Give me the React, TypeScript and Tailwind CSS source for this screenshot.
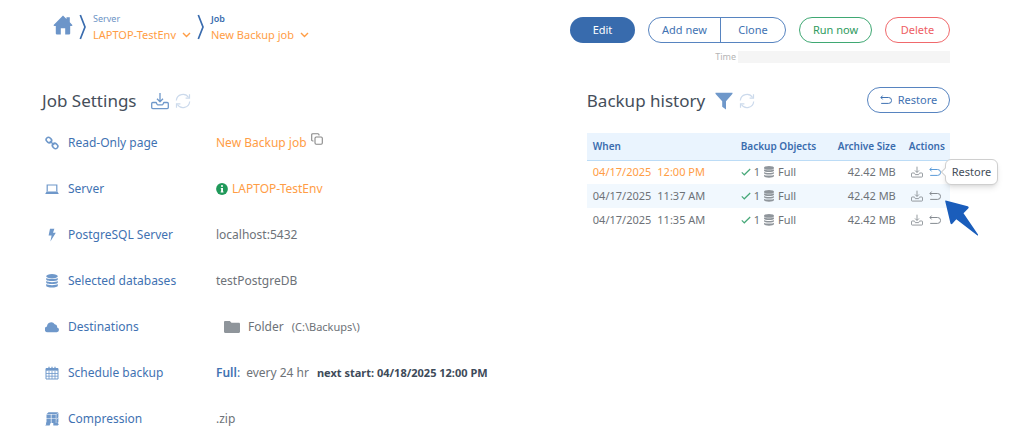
import type { ReactNode } from "react";

type IconProps = { className?: string };

const ChainIcon = ({ className }: IconProps) => (
  <svg viewBox="0 0 14 14" className={className} fill="none" stroke="currentColor" strokeWidth="1.6" aria-hidden="true">
    <rect x="1" y="1.800" width="5.800" height="4.600" rx="2.3" transform="rotate(45 3.9 4.1)" />
    <rect x="7.200" y="7.600" width="5.800" height="4.600" rx="2.3" transform="rotate(45 10.1 9.9)" />
    <path d="M4.800 5l4.400 4" strokeWidth="1.500" />
  </svg>
);

const LaptopIcon = ({ className }: IconProps) => (
  <svg viewBox="0 0 14 14" className={className} aria-hidden="true">
    <path d="M2.2 9.4V3h9.6v6.4" fill="none" stroke="currentColor" strokeWidth="1.2" />
    <path d="M1.6 9.4h10.8l1.4 2.6H.2z" fill="currentColor" />
  </svg>
);

const BoltIcon = ({ className }: IconProps) => (
  <svg viewBox="0 0 14 14" className={className} fill="currentColor" aria-hidden="true">
    <path d="M5 .8h4.4L8 4.8h2.8L5.4 13.4 6.6 7.600H3.600z" />
  </svg>
);

const DatabaseIcon = ({ className }: IconProps) => (
  <svg viewBox="0 0 14 14" className={className} fill="currentColor" aria-hidden="true">
    <ellipse cx="7" cy="2.300" rx="5.800" ry="2.200" />
    <path d="M1.200 3.900c1.500 1.500 10.100 1.500 11.600 0v1.500c0 2-11.600 2-11.600 0z" />
    <path d="M1.200 7c1.500 1.500 10.100 1.500 11.600 0v1.500c0 2-11.600 2-11.600 0z" />
    <path d="M1.200 10.100c1.500 1.500 10.100 1.500 11.600 0v1.700c0 2.400-11.600 2.400-11.600 0z" />
  </svg>
);

const CloudIcon = ({ className }: IconProps) => (
  <svg viewBox="0 0 14 14" className={className} fill="currentColor" aria-hidden="true">
    <path d="M3 12.300A3 3 0 0 1 2 6.400 4.200 4.200 0 0 1 9.700 4.200a2.800 2.800 0 0 1 2.400 3.200A2.500 2.500 0 0 1 11.800 12.300z" />
  </svg>
);

const CalendarIcon = ({ className }: IconProps) => (
  <svg viewBox="0 0 14 14" className={className} fill="none" stroke="currentColor" aria-hidden="true">
    <path d="M1 2.500h12V13H1z" strokeWidth="1" />
    <path d="M1 3.500h12" strokeWidth="2.400" />
    <path d="M4 0.800v3M7 0.800v3M10 0.800v3" strokeWidth="1.200" />
    <path d="M4 5v8M7 5v8M10 5v8M1 7.500h12M1 10.200h12" strokeWidth="0.800" />
  </svg>
);

const ArchiveIcon = ({ className }: IconProps) => (
  <svg viewBox="0 0 14 14" className={className} fill="currentColor" aria-hidden="true">
    <path d="M3.500.3h9.800l-1.700 1.800H1.700z" />
    <path d="M1.500 2.500h4.300v3.900H1.500zM6.500 2.500h4.300v3.900H6.500zM11.300 2.500 13.400.7v4.800l-2.100 1.600zM1.500 7h4.300v4H1.500zM6.500 7h4.300v4H6.500zM11.300 7.600l2.100-1.700v4.400l-2.100 1.500z" />
    <path d="M.9 10.600h4.900l-1.200 3H.2l1-1.300zM8.300 11h4.400l1.200 1.200-1.200 1.400H8.300z" />
  </svg>
);

const HomeIcon = ({ className }: IconProps) => (
  <svg viewBox="0 0 20 20" className={className} fill="currentColor" aria-hidden="true">
    <path d="M10 .6 13.500 4V2.200h3.300v5L19.600 10.200l-1 .9h-1.400v7.500c0 .5-.3.800-.8.800h-4.200v-6.200H7.800v6.200H3.600c-.5 0-.8-.3-.8-.8v-7.500H1.400l-1-.9z" />
  </svg>
);

const AngleSeparator = () => (
  <svg viewBox="0 0 8 26" className="h-[26px] w-2 shrink-0 text-[#3a6cae]" fill="none" stroke="currentColor" strokeWidth="1.700" aria-hidden="true">
    <path d="M1.300 1 6 13 1.300 25" />
  </svg>
);

const CaretIcon = () => (
  <svg viewBox="0 0 9 6" className="h-1.5 w-[9px]" fill="none" stroke="currentColor" strokeWidth="1.400" aria-hidden="true">
    <path d="M1 1l3.500 3.500L8 1" />
  </svg>
);

const TrayDownIcon = ({ className }: IconProps) => (
  <svg viewBox="0 0 18 18" className={className} fill="none" stroke="currentColor" strokeWidth="1.300" strokeLinejoin="round" aria-hidden="true">
    <path d="M9 1v8.500M6 6.700l3 3 3-3" />
    <path d="M5 10.500H1.800c-.7 0-1.100.4-1.100 1v4c0 .7.400 1.100 1.100 1.100h14.400c.7 0 1.100-.4 1.100-1.100v-4c0-.6-.4-1-1.100-1H13c-.6 0-.8 2.400-1.700 2.400H6.700c-.9 0-1.100-2.400-1.700-2.400z" />
  </svg>
);

const RefreshIcon = ({ className }: IconProps) => (
  <svg viewBox="0 0 16 16" className={className} fill="none" stroke="currentColor" strokeWidth="1.200" aria-hidden="true">
    <path d="M1.300 7.500A6.700 6.700 0 0 1 13.600 4.500M14.700 8.500A6.700 6.700 0 0 1 2.400 11.500" />
    <path d="M14.500 1.300v3.900h-3.900M1.500 14.700v-3.900h3.900" />
  </svg>
);

const ReturnIcon = ({ className }: IconProps) => (
  <svg viewBox="0 0 12 10" className={className} fill="none" stroke="currentColor" strokeWidth="1" aria-hidden="true">
    <path d="M2.600.6.900 2.500l1.700 1.900M1 2.500h7.600a2.900 2.900 0 0 1 0 5.900H1.200" />
  </svg>
);

const FunnelIcon = ({ className }: IconProps) => (
  <svg viewBox="0 0 18 18" className={className} fill="currentColor" aria-hidden="true">
    <path d="M.5.800h17c.2 1-.3 1.500-.8 2L11 9.300V17.500l-3.800-2.700V9.300L1.300 2.800c-.5-.5-1-1-.8-2z" />
  </svg>
);

const CopyIcon = ({ className }: IconProps) => (
  <svg viewBox="0 0 12 12" className={className} fill="none" stroke="currentColor" strokeWidth="1.100" aria-hidden="true">
    <rect x="4" y="4" width="7.300" height="7.300" rx="1.200" />
    <path d="M2.500 8H1.800C1.100 8 .7 7.600.7 6.900V1.800C.7 1.100 1.100.7 1.800.7h5.100c.7 0 1.100.4 1.100 1.100v.7" />
  </svg>
);

const InfoIcon = ({ className }: IconProps) => (
  <svg viewBox="0 0 12 12" className={className} aria-hidden="true">
    <circle cx="6" cy="6" r="5.900" fill="#20995a" />
    <path d="M5 2.300h2v1.500H5zM4.700 4.900H7v3.600h.5v1H4.600v-1h.5V5.800h-.4z" fill="#fff" />
  </svg>
);

const FolderIcon = ({ className }: IconProps) => (
  <svg viewBox="0 0 16 14" className={className} fill="currentColor" aria-hidden="true">
    <path d="M0 2.200C0 1.500.5 1 1.200 1h4.600l1.700 1.800h7.300c.7 0 1.200.5 1.200 1.200v7.800c0 .7-.5 1.200-1.200 1.200H1.200C.5 13 0 12.500 0 11.800z" />
  </svg>
);

const CheckIcon = ({ className }: IconProps) => (
  <svg viewBox="0 0 10 8" className={className} fill="none" stroke="currentColor" strokeWidth="1.200" aria-hidden="true">
    <path d="M.8 4.300 3.300 6.800 9.200 1" />
  </svg>
);

const Crumb = ({ label, name, strong }: { label: string; name: string; strong?: boolean }) => (
  <div className="flex flex-col">
    <span className={strong ? "text-[9px] leading-4 font-semibold text-[#3a6cae]" : "text-[9px] leading-4 text-[#6c93c5]"}>
      {label}
    </span>
    <button type="button" className="flex items-center gap-1.5 text-[11px] leading-4 text-[#ff9d45]">
      {name}
      <CaretIcon />
    </button>
  </div>
);

const Setting = ({ icon, label, children }: { icon: ReactNode; label: string; children: ReactNode }) => (
  <div className="flex h-[46px] items-center">
    <dt className="flex w-[174px] shrink-0 items-center gap-[9px] pl-[3px] text-[#3f72b2]">
      <span className="text-[#6f98ca]">{icon}</span>
      {label}
    </dt>
    <dd className="flex items-center text-[#6d7278]">{children}</dd>
  </div>
);

const history = [
  { date: "04/17/2025", time: "12:00 PM", active: true },
  { date: "04/17/2025", time: "11:37 AM", active: false },
  { date: "04/17/2025", time: "11:35 AM", active: false },
];

export default function App() {
  return (
    <div className="bg-white pr-[74px] pl-[42px] font-['Noto_Sans','Open_Sans',sans-serif] text-[12px] leading-5 text-[#6d7278]">
      <header className="flex items-start justify-between pt-[11px]">
        <nav aria-label="Breadcrumb" className="flex items-center gap-1.5 pl-[11px]">
          <a href="#home" aria-label="Home" className="mb-1 text-[#6c95c9]">
            <HomeIcon className="size-5" />
          </a>
          <AngleSeparator />
          <Crumb label="Server" name="LAPTOP-TestEnv" />
          <AngleSeparator />
          <Crumb label="Job" name="New Backup job" strong />
        </nav>
        <div className="flex flex-col items-end pt-1.5 text-[11px]">
          <div className="flex gap-[13px]">
            <button type="button" className="h-[26px] w-[65px] rounded-full bg-[#386bad] text-white">Edit</button>
            <div className="flex h-[26px] overflow-hidden rounded-full border border-[#5784c0] text-[#3f72b2]">
              <button type="button" className="w-[72px] border-r border-[#5784c0]">Add new</button>
              <button type="button" className="w-16">Clone</button>
            </div>
            <button type="button" className="h-[26px] w-[73px] rounded-full border border-[#3fa873] text-[#2f9b60]">Run now</button>
            <button type="button" className="h-[26px] w-[65px] rounded-full border border-[#f0696c] text-[#ee6064]">Delete</button>
          </div>
          <div className="mt-1 flex items-center gap-0.5 text-[9px] leading-5 text-[#b5b5b5]">
            Time
            <span className="h-3 w-[212px] bg-[#f5f5f5]" />
          </div>
        </div>
      </header>

      <main className="grid grid-cols-[minmax(0,3fr)_minmax(0,2fr)] pt-[17px]">
        <section>
          <div className="flex h-[33px] items-center">
            <h1 className="text-[17px] leading-6 text-[#454e5a]">Job Settings</h1>
            <button type="button" aria-label="Download settings" className="ml-3.5 text-[#6f98ca]">
              <TrayDownIcon className="size-[18px]" />
            </button>
            <button type="button" aria-label="Refresh settings" className="ml-1.5 text-[#ccdaec]">
              <RefreshIcon className="size-4" />
            </button>
          </div>
          <dl className="pt-[3px]">
            <Setting icon={<ChainIcon className="size-3.5" />} label="Read-Only page">
              <a href="#job" className="text-[#ff9d45]">New Backup job</a>
              <button type="button" aria-label="Copy link" className="mb-2 ml-1 text-[#888]">
                <CopyIcon className="size-3" />
              </button>
            </Setting>
            <Setting icon={<LaptopIcon className="size-3.5" />} label="Server">
              <InfoIcon className="mr-1 size-3" />
              <a href="#server" className="text-[#ff9d45]">LAPTOP-TestEnv</a>
            </Setting>
            <Setting icon={<BoltIcon className="size-3.5" />} label="PostgreSQL Server">localhost:5432</Setting>
            <Setting icon={<DatabaseIcon className="size-3.5" />} label="Selected databases">testPostgreDB</Setting>
            <Setting icon={<CloudIcon className="size-3.5" />} label="Destinations">
              <FolderIcon className="ml-2 h-3.5 w-4 text-[#8f959b]" />
              <span className="ml-2">Folder</span>
              <span className="ml-2 text-[11px]">(C:\Backups\)</span>
            </Setting>
            <Setting icon={<CalendarIcon className="size-3.5" />} label="Schedule backup">
              <span className="text-[#3f72b2]"><b className="font-semibold">Full</b>:</span>
              <span className="ml-1.5">every 24 hr</span>
              <b className="ml-2 text-[11px] font-bold text-[#3d4a59]">next start: 04/18/2025 12:00 PM</b>
            </Setting>
            <Setting icon={<ArchiveIcon className="size-3.5" />} label="Compression">.zip</Setting>
          </dl>
        </section>

        <section>
          <div className="flex h-[33px] items-center">
            <h2 className="text-[17px] leading-6 text-[#454e5a]">Backup history</h2>
            <button type="button" aria-label="Filter history" className="ml-2.5 text-[#6f98ca]">
              <FunnelIcon className="size-[18px]" />
            </button>
            <button type="button" aria-label="Refresh history" className="ml-1.5 text-[#ccdaec]">
              <RefreshIcon className="size-4" />
            </button>
            <button type="button" className="mb-0.5 ml-auto flex h-[26px] w-[83px] items-center justify-center gap-1.5 rounded-full border border-[#5784c0] text-[11px] text-[#3f72b2]">
              <ReturnIcon className="h-2.5 w-3" />
              Restore
            </button>
          </div>
          <table className="mt-4 w-full table-fixed text-left text-[11px] whitespace-nowrap">
            <colgroup>
              <col className="w-[41%]" />
              <col className="w-[24%]" />
              <col className="w-[22%]" />
              <col className="w-[13%]" />
            </colgroup>
            <thead>
              <tr className="h-[27px] border-b border-[#bcdcf6] bg-[#eaf4fe] text-[10px] text-[#3a6cae]">
                <th className="pl-1.5 font-semibold">When</th>
                <th className="pl-[5px] font-semibold">Backup Objects</th>
                <th className="pr-[7px] text-right font-semibold">Archive Size</th>
                <th className="pl-1.5 font-semibold">Actions</th>
              </tr>
            </thead>
            <tbody>
              {history.map((run) => (
                <tr key={run.time} className="h-6 even:bg-[#f1f8fe]">
                  <td className={run.active ? "pl-1.5 text-[#ff9d45]" : "pl-1.5"}>
                    {run.date}
                    <span className="ml-1.5">{run.time}</span>
                  </td>
                  <td className="pl-[5px]">
                    <div className="flex items-center gap-[3px]">
                      <CheckIcon className="h-2 w-2.5 text-[#46a878]" />
                      1
                      <DatabaseIcon className="size-3 text-[#8f959b]" />
                      Full
                    </div>
                  </td>
                  <td className="pr-[7px] text-right">42.42 MB</td>
                  <td className="pl-2">
                    <div className="flex items-center gap-1.5">
                      <button type="button" aria-label="Download" className="text-[#858b91]">
                        <TrayDownIcon className="size-3" />
                      </button>
                      <div className="relative flex">
                        <button type="button" aria-label="Restore" className={run.active ? "text-[#5b9bd8]" : "text-[#858b91]"}>
                          <ReturnIcon className="h-2.5 w-3" />
                        </button>
                        {run.active && (
                          <div role="tooltip" className="absolute top-1/2 left-full z-10 ml-1 -translate-y-1/2 rounded-md border border-[#cfcfcf] bg-white px-1.5 text-[11px] leading-6 text-[#454e5a] shadow-md">
                            <span className="absolute top-1/2 -left-1 size-1.5 -translate-y-1/2 rotate-45 border-b border-l border-[#cfcfcf] bg-white" />
                            Restore
                          </div>
                        )}
                        {run.time === "11:37 AM" && (
                          <svg viewBox="0 0 34 37" className="absolute top-[9px] left-4 z-20 h-[37px] w-[34px]" fill="#1a5dbb" aria-hidden="true">
                            <path d="M.8.500 22.700 6.300c1.200.4 1.300 1.500.5 2.200L18.500 13.200 33 34.500c.4.900-.2 1.400-.9.800L11.300 19.300 7.300 23.700c-.8.800-1.800.5-1.900-.6L.2 1.300C.1.800.300.4.8.500z" />
                          </svg>
                        )}
                      </div>
                    </div>
                  </td>
                </tr>
              ))}
            </tbody>
          </table>
        </section>
      </main>
    </div>
  );
}
